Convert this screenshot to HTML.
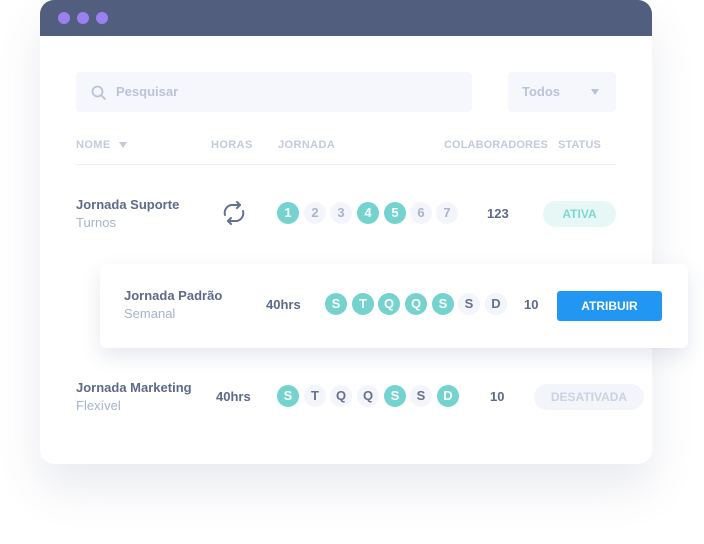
<!DOCTYPE html>
<html><head><meta charset="utf-8"><style>
*{margin:0;padding:0;box-sizing:border-box}
body{width:704px;height:544px;background:#fff;font-family:"Liberation Sans",sans-serif;position:relative;overflow:hidden}
.a{position:absolute}
.win{left:40px;top:0;width:612px;height:464px;border-radius:14px;background:#fff;box-shadow:0 24px 44px rgba(80,90,130,.12);overflow:hidden}
.bar{left:0;top:0;width:612px;height:36px;background:#525e7e}
.dot{width:12px;height:12px;border-radius:50%;background:#9b80f2;top:12px}
.h{font-size:11px;font-weight:bold;color:#c3cadd;top:139px;letter-spacing:.4px}
.nm{font-size:13px;font-weight:bold;color:#5d6a88}
.sb{font-size:13px;color:#a8b3cd}
.c{width:22px;height:22px;border-radius:50%;font-size:13px;font-weight:bold;text-align:center;line-height:22px;background:#f3f5fa;color:#a9b3cc}
.on{background:#74d3ce;color:#fff}
.cd{color:#66718f}
.num{font-size:13px;font-weight:bold;color:#5d6a88}
</style></head><body>
<div class="a win">
 <div class="a bar"></div>
 <div class="a dot" style="left:18px"></div>
 <div class="a dot" style="left:37px"></div>
 <div class="a dot" style="left:56px"></div>
</div>
<div class="a" style="left:76px;top:72px;width:396px;height:40px;background:#f6f7fc;border-radius:4px"></div>
<svg class="a" style="left:91px;top:85px" width="16" height="16" viewBox="0 0 16 16"><circle cx="6.5" cy="6.5" r="5" fill="none" stroke="#b9c2d8" stroke-width="1.8"/><path d="M10.2 10.2L14 14" stroke="#b9c2d8" stroke-width="1.8" stroke-linecap="round"/></svg>
<div class="a" style="left:116px;top:84px;font-size:13px;font-weight:bold;color:#bac3d9">Pesquisar</div>
<div class="a" style="left:508px;top:72px;width:108px;height:40px;background:#f6f7fc;border-radius:4px"></div>
<div class="a" style="left:522px;top:84px;font-size:13px;font-weight:bold;color:#bac3d9">Todos</div>
<div class="a" style="left:591px;top:89px;border-left:4.5px solid transparent;border-right:4.5px solid transparent;border-top:6px solid #b9c2d8"></div>
<div class="a h" style="left:76px">NOME</div>
<div class="a" style="left:119px;top:142px;border-left:4px solid transparent;border-right:4px solid transparent;border-top:6px solid #c3cadd"></div>
<div class="a h" style="left:211px">HORAS</div>
<div class="a h" style="left:278px">JORNADA</div>
<div class="a h" style="left:444px;letter-spacing:.1px">COLABORADORES</div>
<div class="a h" style="left:558px;letter-spacing:.1px">STATUS</div>
<div class="a" style="left:76px;top:164px;width:540px;height:1px;background:#eef0f6"></div>

<div class="a nm" style="left:76px;top:197px">Jornada Suporte</div>
<div class="a sb" style="left:76px;top:215px">Turnos</div>
<svg class="a" style="left:220px;top:200px" width="28" height="26" viewBox="0 0 28 26"><g fill="none" stroke="#66718f" stroke-width="2" stroke-linecap="round" stroke-linejoin="round"><path d="M5 15 A8 8 0 0 1 11 5 H20"/><path d="M17 2 L20 5 L17 8"/><path d="M23 11 A8 8 0 0 1 17 21 H8"/><path d="M11 18 L8 21 L11 24"/></g></svg>
<div class="a c on" style="left:277px;top:202px">1</div>
<div class="a c" style="left:304px;top:202px">2</div>
<div class="a c" style="left:330px;top:202px">3</div>
<div class="a c on" style="left:357px;top:202px">4</div>
<div class="a c on" style="left:384px;top:202px">5</div>
<div class="a c" style="left:410px;top:202px">6</div>
<div class="a c" style="left:436px;top:202px">7</div>
<div class="a num" style="left:487px;top:206px">123</div>
<div class="a" style="left:543px;top:201px;width:73px;height:26px;border-radius:13px;background:#e6f7f6;color:#7dd8d2;font-size:12px;font-weight:bold;text-align:center;line-height:26px">ATIVA</div>

<div class="a" style="left:100px;top:264px;width:588px;height:84px;background:#fff;border-radius:6px;box-shadow:0 8px 20px rgba(80,90,140,.14)"></div>
<div class="a nm" style="left:124px;top:288px">Jornada Padrão</div>
<div class="a sb" style="left:124px;top:306px">Semanal</div>
<div class="a num" style="left:266px;top:297px">40hrs</div>
<div class="a c on" style="left:325px;top:293px">S</div>
<div class="a c on" style="left:352px;top:293px">T</div>
<div class="a c on" style="left:378px;top:293px">Q</div>
<div class="a c on" style="left:405px;top:293px">Q</div>
<div class="a c on" style="left:432px;top:293px">S</div>
<div class="a c cd" style="left:458px;top:293px">S</div>
<div class="a c cd" style="left:485px;top:293px">D</div>
<div class="a num" style="left:524px;top:297px">10</div>
<div class="a" style="left:557px;top:291px;width:105px;height:30px;border-radius:3px;background:#2196f3;color:#fff;font-size:12px;font-weight:bold;text-align:center;line-height:30px">ATRIBUIR</div>

<div class="a nm" style="left:76px;top:380px">Jornada Marketing</div>
<div class="a sb" style="left:76px;top:398px">Flexível</div>
<div class="a num" style="left:216px;top:389px">40hrs</div>
<div class="a c on" style="left:277px;top:385px">S</div>
<div class="a c cd" style="left:304px;top:385px">T</div>
<div class="a c cd" style="left:330px;top:385px">Q</div>
<div class="a c cd" style="left:357px;top:385px">Q</div>
<div class="a c on" style="left:384px;top:385px">S</div>
<div class="a c cd" style="left:410px;top:385px">S</div>
<div class="a c on" style="left:437px;top:385px">D</div>
<div class="a num" style="left:490px;top:389px">10</div>
<div class="a" style="left:534px;top:384px;width:110px;height:26px;border-radius:13px;background:#f3f5fa;color:#cbd2e2;font-size:12px;font-weight:bold;text-align:center;line-height:26px">DESATIVADA</div>
</body></html>
